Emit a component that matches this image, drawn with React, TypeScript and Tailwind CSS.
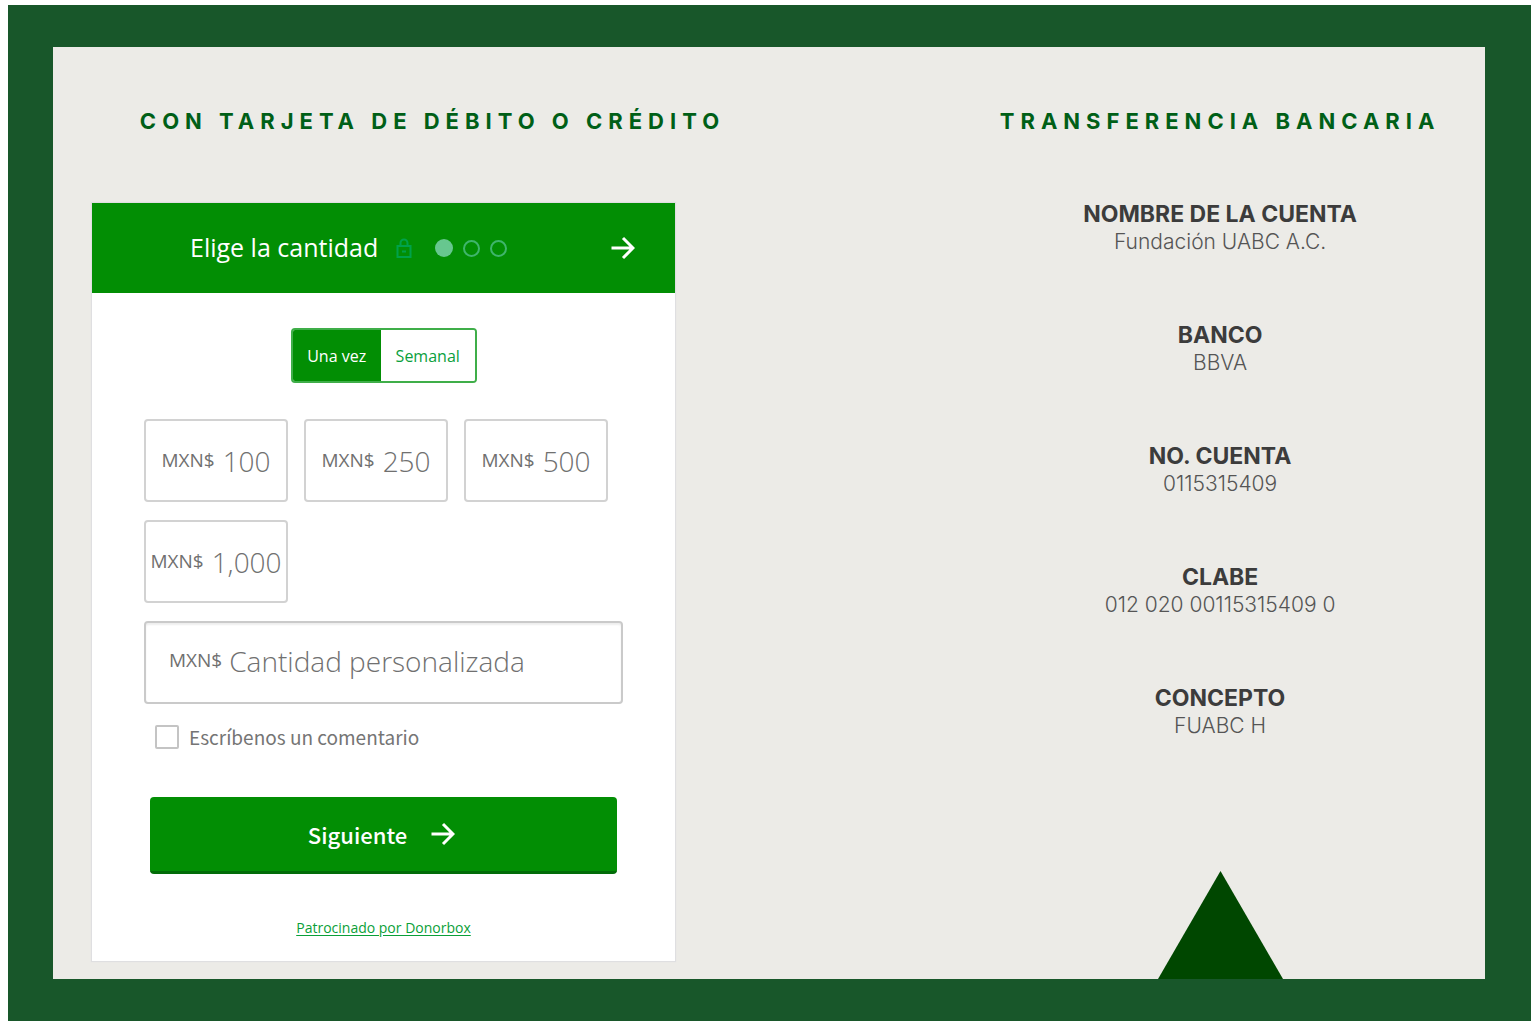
import React, { useState } from "react";

interface AccountDetail {
  label: string;
  value: string;
}

const details: AccountDetail[] = [
  { label: "NOMBRE DE LA CUENTA", value: "Fundación UABC A.C." },
  { label: "BANCO", value: "BBVA" },
  { label: "NO. CUENTA", value: "0115315409" },
  { label: "CLABE", value: "012 020 00115315409 0" },
  { label: "CONCEPTO", value: "FUABC H" },
];

const amounts: string[] = ["100", "250", "500", "1,000"];

const Arrow = (): React.JSX.Element => (
  <svg className="h-6 w-6 shrink-0" viewBox="0 0 24 24" fill="none" stroke="currentColor" strokeWidth="3" aria-hidden="true">
    <path d="M0.5 12H22M12 2l10 10-10 10" />
  </svg>
);

const Lock = (): React.JSX.Element => (
  <svg className="h-5 w-4 shrink-0 text-[#00a24a]" viewBox="0 0 16 20" fill="none" stroke="currentColor" strokeWidth="2" aria-hidden="true">
    <rect x="1.5" y="8" width="13" height="11" />
    <path d="M4.5 8V5a3.5 3.5 0 0 1 7 0v3M6 13.5h4" />
  </svg>
);

const DonationCard = (): React.JSX.Element => {
  const [frequency, setFrequency] = useState<string>("Una vez");
  const [amount, setAmount] = useState<string>("");

  return (
    <form
      className="ml-[39px] max-w-[583px] bg-white font-['Open_Sans',sans-serif] shadow-[0_0_1px_1px_#dfdfe1]"
      onSubmit={(e) => e.preventDefault()}
    >
      <div className="flex h-[90px] items-center bg-[#028e04] pr-10 pl-[98px] text-white">
        <h3 className="mr-[18px] text-[25px]">Elige la cantidad</h3>
        <Lock />
        <div className="ml-[23px] flex items-center gap-[10px]">
          <span className="h-[18px] w-[18px] rounded-full bg-[#67c78f]" />
          <span className="h-[17px] w-[17px] rounded-full border-2 border-[#3fb56c]" />
          <span className="h-[17px] w-[17px] rounded-full border-2 border-[#3fb56c]" />
        </div>
        <button type="button" className="ml-auto" aria-label="Siguiente paso">
          <Arrow />
        </button>
      </div>

      <div className="px-[52px] pt-[35px] pb-[22px]">
        <div className="mx-auto flex h-[55px] w-[186px] overflow-hidden rounded border-2 border-[#3fae49] text-base font-medium">
          {["Una vez", "Semanal"].map((option) => (
            <button
              key={option}
              type="button"
              onClick={() => setFrequency(option)}
              className={
                frequency === option
                  ? "flex-auto bg-[#028e04] px-3 whitespace-nowrap text-white"
                  : "flex-auto bg-white px-3 whitespace-nowrap text-[#0aa03c]"
              }
            >
              {option}
            </button>
          ))}
        </div>

        <div className="mt-9 grid grid-cols-[repeat(3,144px)] gap-x-4 gap-y-[18px]">
          {amounts.map((value) => (
            <button
              key={value}
              type="button"
              onClick={() => setAmount(value)}
              className="flex h-[83px] items-center justify-center gap-2 rounded border-2 border-[#d2d2d2] text-[#707070]"
            >
              <span className="text-[19px]">MXN$</span>
              <span className="text-[28px] font-light">{value}</span>
            </button>
          ))}
        </div>

        <label className="mt-[18px] flex h-[83px] items-center gap-[7px] rounded border-2 border-[#cacaca] px-[23px] pb-1 text-[#707070] shadow-[inset_0_2px_2px_#eeeeee]">
          <span className="text-[19px]">MXN$</span>
          <input
            type="text"
            value={amount}
            onChange={(e) => setAmount(e.target.value)}
            placeholder="Cantidad personalizada"
            className="min-w-0 flex-1 text-[28px] font-light outline-none placeholder:text-[#707070]"
          />
        </label>

        <label className="mt-[21px] ml-[11px] flex h-6 items-center gap-[10px] font-['Noto_Sans_CJK_SC',sans-serif] text-[19px] text-[#757575]">
          <input type="checkbox" className="h-6 w-6 appearance-none rounded-xs border-2 border-[#c4c4c4] checked:bg-[#028e04]" />
          Escríbenos un comentario
        </label>

        <button
          type="submit"
          className="mx-auto mt-12 flex h-[77px] w-[467px] items-center justify-center gap-6 rounded border-b-3 border-[#026c08] bg-[#028e04] pr-1 font-['Noto_Sans_CJK_SC',sans-serif] text-[22px] font-medium text-white"
        >
          Siguiente
          <Arrow />
        </button>

        <p className="mt-[43px] text-center text-sm leading-[22px]">
          <a href="#donorbox" className="text-[#0a9f38] underline underline-offset-2">
            Patrocinado por Donorbox
          </a>
        </p>
      </div>
    </form>
  );
};

const BankTransfer = (): React.JSX.Element => (
  <section className="flex flex-col items-center pt-[60px] text-center">
    <h2 className="text-[22px] leading-7 font-bold tracking-[6px] whitespace-nowrap text-[#005f17]">
      TRANSFERENCIA BANCARIA
    </h2>
    <dl className="mt-[66px] flex flex-col gap-[67px] leading-[27px]">
      {details.map((detail) => (
        <div key={detail.label}>
          <dt className="text-[23px] font-bold text-[#3c3c3c]">{detail.label}</dt>
          <dd className="text-[21px] font-light text-[#555555]">{detail.value}</dd>
        </div>
      ))}
    </dl>
    <svg className="mt-auto h-[108px] w-[125px]" viewBox="0 0 125 108" aria-hidden="true">
      <path d="M62.5 0L125 108H0z" fill="#004700" />
    </svg>
  </section>
);

const App = (): React.JSX.Element => {
  return (
    <div className="bg-white pt-[5px] pr-[5px] pb-[5px] pl-2">
      <div className="bg-[#18572a] py-[42px] pr-[46px] pl-[45px]">
        <main className="grid grid-cols-[53%_37%] justify-between bg-[#ecebe7] font-['Inter',sans-serif]">
          <section className="pt-[60px] pb-[18px]">
            <h2 className="mb-[68px] text-center text-[22px] leading-7 font-bold tracking-[6px] whitespace-nowrap text-[#005f17]">
              CON TARJETA DE DÉBITO O CRÉDITO
            </h2>
            <DonationCard />
          </section>
          <BankTransfer />
        </main>
      </div>
    </div>
  );
};

export default App;
